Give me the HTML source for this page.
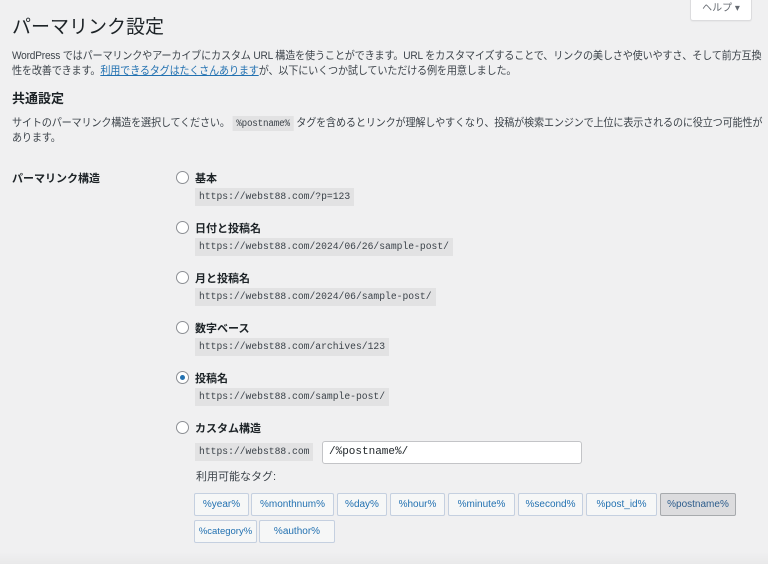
<!DOCTYPE html>
<html><head><meta charset="utf-8">
<style>
*{margin:0;padding:0;box-sizing:border-box}
html,body{width:768px;height:564px;overflow:hidden;background:#f0f0f1}
body{font-family:"Liberation Sans","Noto Sans CJK JP",sans-serif;color:#3c434a;font-size:11px;position:relative}
.a{position:absolute;white-space:nowrap}
.help{position:absolute;left:690px;top:-1px;width:62px;height:22px;background:#fff;border:1px solid #dcdcde;border-top:none;border-radius:0 0 3px 3px;font-size:10px;color:#646970;text-align:center;line-height:20px;box-shadow:0 1px 1px rgba(0,0,0,.04)}
h1{position:absolute;left:12px;top:12px;font-size:19px;font-weight:400;color:#1d2327}
h2{position:absolute;left:12px;top:88px;font-size:13px;font-weight:700;color:#1d2327}
.p{line-height:15px;font-size:10.6px;transform:scaleX(0.955);transform-origin:0 0}
a{color:#2271b1;text-decoration:underline}
code{font-family:"Liberation Mono","Noto Sans CJK JP",monospace;background:#e2e2e3;padding:2px 4px;font-size:9.7px;color:#3c434a}
.r{position:absolute;left:176px;width:13px;height:13px;border-radius:50%;border:1px solid #8c8f94;background:#fff}
.r.on::after{content:"";position:absolute;left:3px;top:3px;width:5px;height:5px;border-radius:50%;background:#2271b1}
.lb{position:absolute;left:195px;font-weight:700;color:#1d2327;font-size:11px}
.cd{position:absolute;left:195px;height:18px;line-height:18px;background:#e2e2e3;padding:0 4px;font-family:"Liberation Mono",monospace;font-size:9.7px;color:#3c434a;white-space:nowrap}
.inp{position:absolute;left:322px;top:441px;width:260px;height:23px;background:#fff;border:1px solid #c3c4c7;border-radius:3px;font-family:"Liberation Mono",monospace;font-size:11px;line-height:21px;padding-left:6px;color:#1d2327}
.b{position:absolute;height:23px;border:1px solid #c5d0e0;background:#f6f7f7;border-radius:2px;color:#2271b1;font-size:10px;text-align:center;line-height:21px;white-space:nowrap;overflow:hidden}
.b.on{background:#dcdcde;border-color:#a7aaad;color:#2c5c8c}
</style></head><body>
<div class="help">ヘルプ ▾</div>
<h1>パーマリンク設定</h1>
<div class="a p" style="left:12px;top:49px;letter-spacing:-0.2px">WordPress ではパーマリンクやアーカイブにカスタム URL 構造を使うことができます。URL をカスタマイズすることで、リンクの美しさや使いやすさ、そして前方互換<br>性を改善できます。<a>利用できるタグはたくさんあります</a>が、以下にいくつか試していただける例を用意しました。</div>
<h2>共通設定</h2>
<div class="a p" style="left:12px;top:116px;letter-spacing:-0.2px">サイトのパーマリンク構造を選択してください。 <code>%postname%</code> タグを含めるとリンクが理解しやすくなり、投稿が検索エンジンで上位に表示されるのに役立つ可能性が<br>あります。</div>
<div class="a" style="left:12px;top:170px;font-weight:700;color:#1d2327">パーマリンク構造</div>

<div class="r" style="top:171px"></div><div class="lb" style="top:170px">基本</div><div class="cd" style="top:188px">https://webst88.com/?p=123</div>
<div class="r" style="top:221px"></div><div class="lb" style="top:220px">日付と投稿名</div><div class="cd" style="top:238px">https://webst88.com/2024/06/26/sample-post/</div>
<div class="r" style="top:271px"></div><div class="lb" style="top:270px">月と投稿名</div><div class="cd" style="top:288px">https://webst88.com/2024/06/sample-post/</div>
<div class="r" style="top:321px"></div><div class="lb" style="top:320px">数字ベース</div><div class="cd" style="top:338px">https://webst88.com/archives/123</div>
<div class="r on" style="top:371px"></div><div class="lb" style="top:370px">投稿名</div><div class="cd" style="top:388px">https://webst88.com/sample-post/</div>
<div class="r" style="top:421px"></div><div class="lb" style="top:420px">カスタム構造</div>
<div class="cd" style="top:443px;width:118px">https://webst88.com</div>
<div class="inp">/%postname%/</div>
<div class="a" style="left:196px;top:468px">利用可能なタグ:</div>

<div class="b" style="left:194px;top:493px;width:55px">%year%</div>
<div class="b" style="left:251px;top:493px;width:83px">%monthnum%</div>
<div class="b" style="left:337px;top:493px;width:50px">%day%</div>
<div class="b" style="left:390px;top:493px;width:55px">%hour%</div>
<div class="b" style="left:448px;top:493px;width:67px">%minute%</div>
<div class="b" style="left:518px;top:493px;width:65px">%second%</div>
<div class="b" style="left:586px;top:493px;width:71px">%post_id%</div>
<div class="b on" style="left:660px;top:493px;width:76px">%postname%</div>
<div class="b" style="left:194px;top:520px;width:63px;font-size:9.5px">%category%</div>
<div class="b" style="left:259px;top:520px;width:76px">%author%</div>
<div style="position:absolute;left:0;top:552px;width:768px;height:12px;background:linear-gradient(#f0f0f1,#e9e9ea)"></div>
</body></html>
